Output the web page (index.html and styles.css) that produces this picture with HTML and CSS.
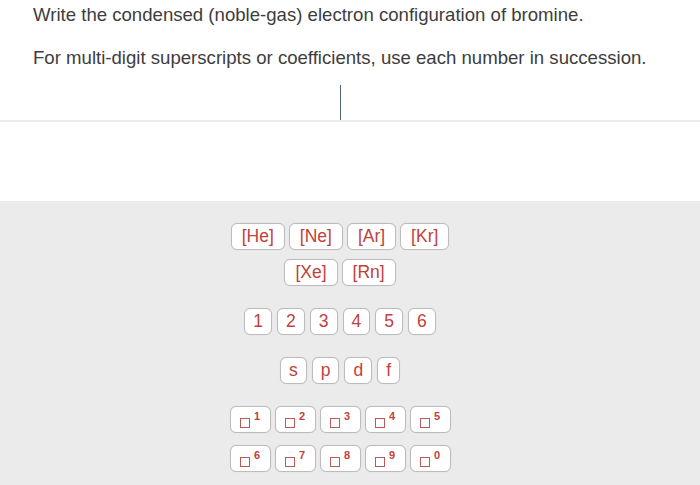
FILE: index.html
```html
<!DOCTYPE html>
<html lang="en">
<head>
<meta charset="utf-8">
<title>Electron configuration</title>
<link rel="stylesheet" href="styles.css">
</head>
<body>
<div class="question">
  <p class="prompt prompt--first">Write the condensed (noble-gas) electron configuration of bromine.</p>
  <p class="prompt prompt--second">For multi-digit superscripts or coefficients, use each number in succession.</p>
</div>
<div class="answer">
  <div class="answer-field"><span class="cursor"></span></div>
</div>
<div class="spacer"></div>
<div class="keypad">
  <div class="group">
    <div class="row">
      <button class="key key--wide">[He]</button>
      <button class="key key--wide">[Ne]</button>
      <button class="key key--wide">[Ar]</button>
      <button class="key key--wide">[Kr]</button>
    </div>
    <div class="row">
      <button class="key key--wide">[Xe]</button>
      <button class="key key--wide">[Rn]</button>
    </div>
  </div>
  <div class="group">
    <div class="row">
      <button class="key">1</button>
      <button class="key">2</button>
      <button class="key">3</button>
      <button class="key">4</button>
      <button class="key">5</button>
      <button class="key">6</button>
    </div>
  </div>
  <div class="group">
    <div class="row">
      <button class="key">s</button>
      <button class="key">p</button>
      <button class="key">d</button>
      <button class="key">f</button>
    </div>
  </div>
  <div class="group group--sup">
    <div class="row">
      <button class="key key--sup"><span class="box"></span><sup class="sup">1</sup></button>
      <button class="key key--sup"><span class="box"></span><sup class="sup">2</sup></button>
      <button class="key key--sup"><span class="box"></span><sup class="sup">3</sup></button>
      <button class="key key--sup"><span class="box"></span><sup class="sup">4</sup></button>
      <button class="key key--sup"><span class="box"></span><sup class="sup">5</sup></button>
    </div>
    <div class="row">
      <button class="key key--sup"><span class="box"></span><sup class="sup">6</sup></button>
      <button class="key key--sup"><span class="box"></span><sup class="sup">7</sup></button>
      <button class="key key--sup"><span class="box"></span><sup class="sup">8</sup></button>
      <button class="key key--sup"><span class="box"></span><sup class="sup">9</sup></button>
      <button class="key key--sup"><span class="box"></span><sup class="sup">0</sup></button>
    </div>
  </div>
</div>
</body>
</html>
```

FILE: styles.css
```css
html, body {
  margin: 0;
  padding: 0;
  background: #ffffff;
  font-family: "Liberation Sans", Arial, sans-serif;
}

body {
  width: 700px;
  height: 485px;
  overflow: hidden;
}

.question {
  padding: 5px 0 0 33px;
}

.prompt {
  margin: 0;
  font-size: 18.6px;
  line-height: 20px;
  color: #3d3d3d;
  white-space: nowrap;
}

.prompt--second {
  margin-top: 23px;
}

.answer {
  height: 52px;
  border-bottom: 2px solid #ececec;
  display: flex;
  justify-content: center;
  box-sizing: content-box;
  width: 680px;
  padding-right: 20px;
}

.answer-field {
  display: flex;
  align-items: flex-end;
  height: 100%;
}

.cursor {
  display: block;
  width: 1px;
  height: 35px;
  background: #4f6478;
}

.spacer {
  height: 79px;
}

.keypad {
  background: #ebebeb;
  height: 284px;
  box-sizing: border-box;
  padding-top: 22px;
  display: flex;
  flex-direction: column;
  align-items: center;
  gap: 22px;
  width: 700px;
  padding-right: 20px;
}

.group {
  display: flex;
  flex-direction: column;
  align-items: center;
  gap: 9px;
}

.group--sup {
  gap: 12px;
}

.row {
  display: flex;
  gap: 5px;
}

.key {
  display: inline-flex;
  align-items: center;
  justify-content: center;
  box-sizing: border-box;
  height: 27px;
  margin: 0;
  padding: 0 8px;
  background: #ffffff;
  border: 1px solid #bcbcbc;
  border-radius: 6px;
  box-shadow: 0 0 1px rgba(0, 0, 0, 0.12);
  font-family: "Liberation Sans", Arial, sans-serif;
  font-size: 17.5px;
  line-height: 1;
  color: #c2413a;
  cursor: pointer;
}

.key--wide {
  padding: 0 10px;
}

.row:has(.key--wide) {
  gap: 4px;
}

.group--sup .row {
  gap: 4px;
}

.key--sup {
  width: 41px;
  padding: 0;
  align-items: center;
}

.box {
  display: block;
  width: 8px;
  height: 8px;
  border: 1px solid #b85a55;
  margin-top: 6px;
}

.sup {
  font-size: 11px;
  font-weight: bold;
  line-height: 1;
  margin-left: 4px;
  margin-top: -6px;
  vertical-align: baseline;
  color: #c2413a;
}
```
